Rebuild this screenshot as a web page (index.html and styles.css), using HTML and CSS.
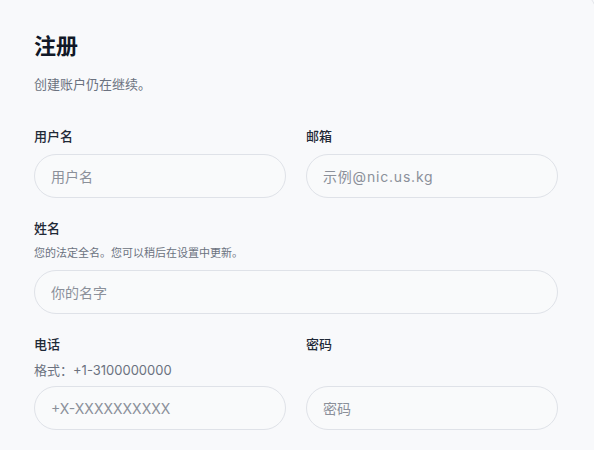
FILE: index.html
```html
<!DOCTYPE html>
<html lang="zh-CN">
<head>
    <meta charset="UTF-8">
    <meta name="viewport" content="width=device-width, initial-scale=1.0">
    <title>注册</title>
    <link rel="stylesheet" href="styles.css">
</head>
<body>
    <div class="signup-card">
        <h1>注册</h1>
        <p class="subtitle">创建账户仍在继续。</p>

        <form class="signup-form">
            <div class="field">
                <label for="username">用户名</label>
                <input id="username" type="text" placeholder="用户名">
            </div>

            <div class="field">
                <label for="email">邮箱</label>
                <input id="email" class="wide-latin" type="email" placeholder="示例@nic.us.kg">
            </div>

            <div class="field full">
                <label for="fullname">姓名</label>
                <span class="hint small">您的法定全名。您可以稍后在设置中更新。</span>
                <input id="fullname" type="text" placeholder="你的名字">
            </div>

            <div class="field">
                <label for="phone">电话</label>
                <span class="hint">格式：+1-3100000000</span>
                <input id="phone" type="tel" placeholder="+X-XXXXXXXXXX">
            </div>

            <div class="field">
                <label for="password">密码</label>
                <input id="password" type="password" placeholder="密码">
            </div>
        </form>
    </div>
</body>
</html>
```

FILE: styles.css
```css
* {
    box-sizing: border-box;
    margin: 0;
    padding: 0;
}

html, body {
    height: 100%;
    overflow: hidden;
}

body {
    font-family: Inter, 'Noto Sans CJK SC', sans-serif;
    background: #f8f9fb;
    color: #111827;
}

.signup-card {
    width: 605px;
    min-height: 480px;
    margin: -10px 0 0 -8px;
    border: 1px solid #e3e5ea;
    border-radius: 24px;
    background: #f8f9fb;
    padding: 40px 40px 0 41px;
}

h1 {
    font-size: 22px;
    line-height: 30px;
    font-weight: 700;
    color: #111827;
}

.subtitle {
    margin-top: 14px;
    font-size: 13px;
    line-height: 18px;
    color: #6b7280;
}

.signup-form {
    margin-top: 34px;
    width: 520px;
    display: grid;
    grid-template-columns: 1fr 1fr;
    column-gap: 20px;
    row-gap: 21px;
}

.field {
    display: flex;
    flex-direction: column;
}

.field.full {
    grid-column: 1 / -1;
}

.field label {
    font-size: 13px;
    line-height: 18px;
    font-weight: 500;
    color: #1f2937;
    margin-bottom: 9px;
}

.hint {
    font-size: 13px;
    line-height: 18px;
    color: #6b7280;
    margin-top: -1px;
    margin-bottom: 7px;
}

.hint.small {
    font-size: 11px;
    line-height: 16px;
    margin-bottom: 9px;
}

.field input {
    margin-top: auto;
    height: 44px;
    border: 1px solid #dfe2e8;
    border-radius: 22px;
    background: #f9fafb;
    padding: 0 16px;
    font-family: inherit;
    font-size: 14px;
    color: #111827;
    outline: none;
}

.field input.wide-latin {
    letter-spacing: 0.8px;
}

.field input::placeholder {
    color: #8b909a;
}
```
